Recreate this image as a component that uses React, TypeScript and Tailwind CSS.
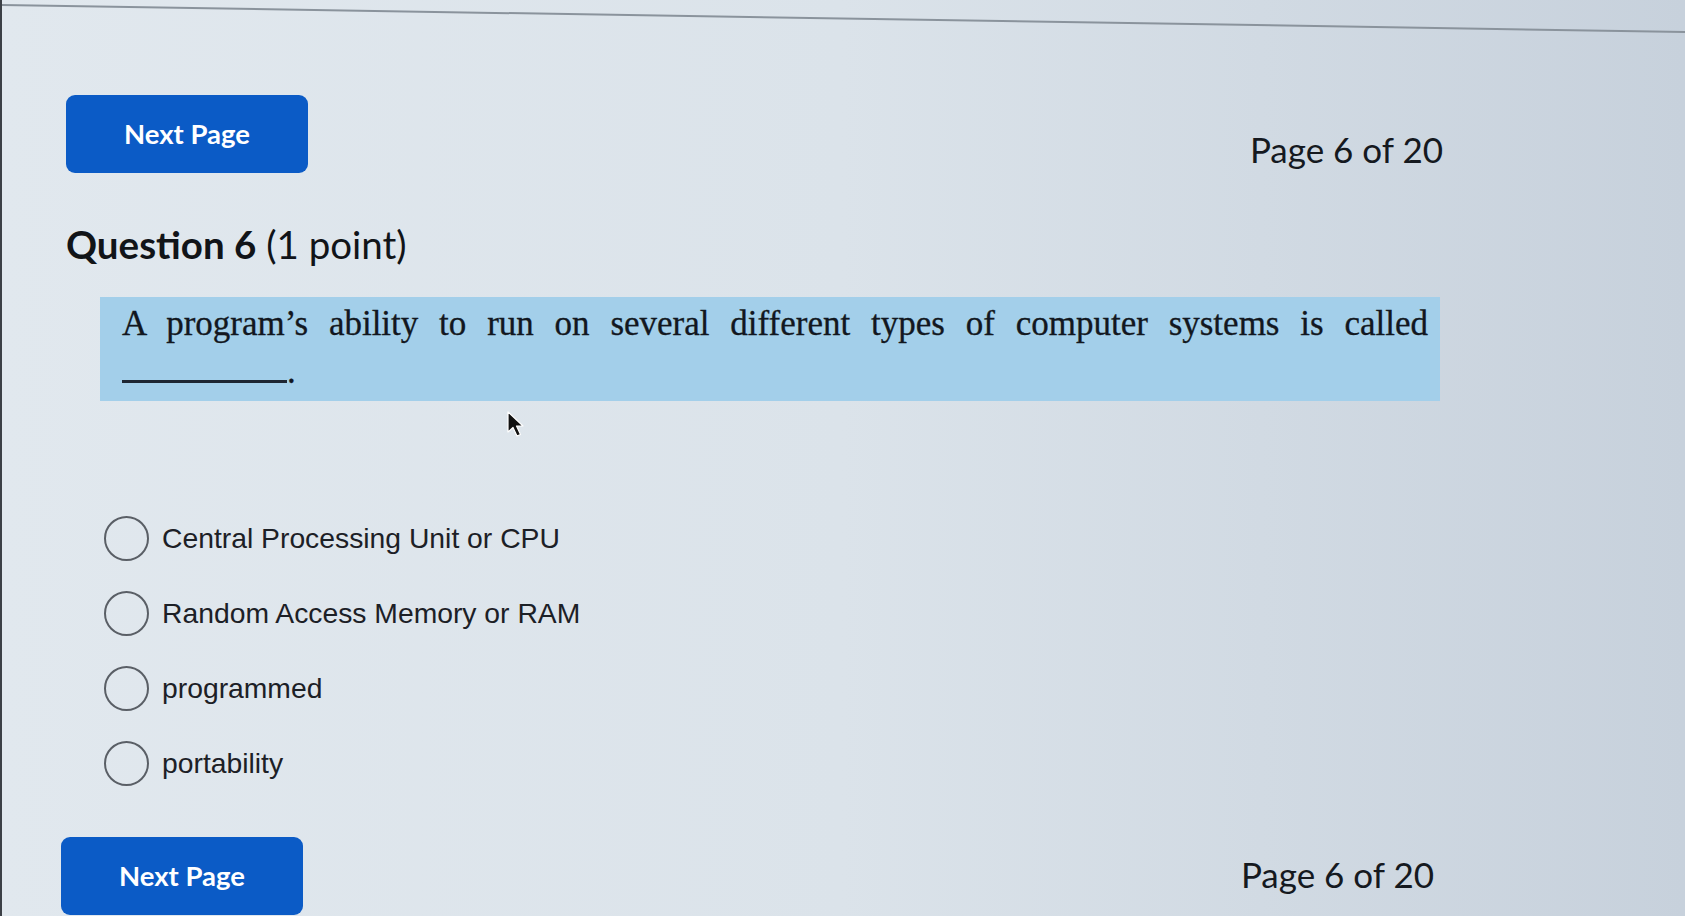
import React from "react";

const lato = { fontFamily: "Lato, 'Noto Sans', sans-serif" };

function NextButton() {
  return (
    <button
      className="w-[242px] h-[78px] rounded-[9px] bg-[#0b5bc6] text-white text-[27.5px] font-bold flex items-center justify-center shrink-0"
      style={lato}
    >
      Next Page
    </button>
  );
}

function Option({ label }: { label: string }) {
  return (
    <div className="flex items-center h-[75px]">
      <span className="w-[45px] h-[45px] rounded-full border-2 border-[#5a5f66] shrink-0" />
      <span
        className="ml-[13px] text-[28.3px] text-[#1c2026]"
        style={{ fontFamily: "'Liberation Sans', Arial, sans-serif" }}
      >
        {label}
      </span>
    </div>
  );
}

export default function App() {
  return (
    <div className="relative w-full h-[916px] overflow-hidden bg-linear-to-r from-[#e1e8ee] via-[#dbe3ea] to-[#c7d1dc] border-l-2 border-[#3c4046]">
      <svg className="absolute inset-0 w-full h-[40px] pointer-events-none" viewBox="0 0 1685 40" preserveAspectRatio="none">
        <line x1="0" y1="5" x2="1685" y2="32" stroke="#8a939c" strokeWidth="2" />
      </svg>

      <div className="pt-[95px] pl-[64px]">
        <div className="flex justify-between items-start w-[1377px]">
          <NextButton />
          <div className="pt-[34px] text-[35px] leading-[40px] text-[#15191f]" style={lato}>
            Page 6 of 20
          </div>
        </div>

        <h2 className="mt-[48px] text-[38.5px] leading-[46px] text-[#111418]" style={lato}>
          <span className="font-bold">Question 6</span> <span>(1 point)</span>
        </h2>

        <div className="mt-[30px] ml-[34px] w-[1340px] bg-[#a3cfea] pl-[22px] pr-[12px] pt-[3px] pb-[5px]">
          <p
            className="text-[35px] leading-[48px] text-justify text-[#121720] [-webkit-text-stroke:0.3px_#121720]"
            style={{ fontFamily: "'Liberation Serif', 'Times New Roman', serif" }}
          >
            A program’s ability to run on several different types of computer systems is called{" "}
            <span className="inline-block w-[165px] border-b-[3px] border-[#1e2733] align-baseline" />.
          </p>
        </div>

        <div className="mt-[100px] ml-[38px] flex flex-col">
          <Option label="Central Processing Unit or CPU" />
          <Option label="Random Access Memory or RAM" />
          <Option label="programmed" />
          <Option label="portability" />
        </div>
      </div>

      <div className="mt-[36px] ml-[59px] flex justify-between items-start w-[1373px]">
        <NextButton />
        <div className="pt-[17px] text-[35px] leading-[40px] text-[#15191f]" style={lato}>
          Page 6 of 20
        </div>
      </div>

      <svg className="absolute left-[505px] top-[411px] w-[18px] h-[27px]" viewBox="0 0 18 27">
        <path d="M1 1 L1 21 L6 16.5 L10 25 L13.5 23.5 L9.5 15 L16 15 Z" fill="#111" stroke="#fff" strokeWidth="1.2" strokeLinejoin="round" />
      </svg>
    </div>
  );
}
